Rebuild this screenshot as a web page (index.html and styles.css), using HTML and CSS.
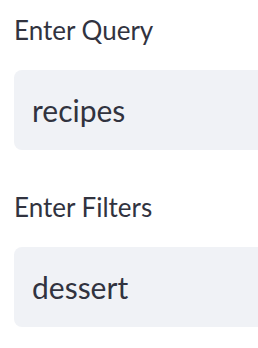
FILE: index.html
```html
<!DOCTYPE html>
<html lang="en">
<head>
    <meta charset="UTF-8">
    <meta name="viewport" content="width=device-width, initial-scale=1.0">
    <title>Search</title>

    <link rel="stylesheet" href="styles.css">
</head>
<body>

    <div class="form">
        <div class="field">
            <label class="label" for="query">Enter Query</label>
            <input class="box" id="query" type="text" value="recipes">
        </div>

        <div class="field">
            <label class="label" for="filters">Enter Filters</label>
            <input class="box" id="filters" type="text" value="dessert">
        </div>
    </div>

</body>
</html>
```

FILE: styles.css
```css
html {
    overflow: hidden;
}

body {
    margin: 0;
    background-color: #ffffff;
    font-family: Lato, "Liberation Sans", sans-serif;
}

.form {
    display: flex;
    flex-direction: column;
    gap: 37px;
    padding: 10px 0 0 14px;
    width: 320px;
}

.field {
    display: flex;
    flex-direction: column;
}

.label {
    font-size: 26px;
    line-height: 40px;
    color: #31333f;
    margin-bottom: 20px;
}

.box {
    height: 80px;
    box-sizing: border-box;
    padding: 0 18px;
    border: none;
    border-radius: 8px;
    background-color: #f0f2f6;
    color: #31333f;
    font-family: inherit;
    font-size: 30px;
    outline: none;
}
```
